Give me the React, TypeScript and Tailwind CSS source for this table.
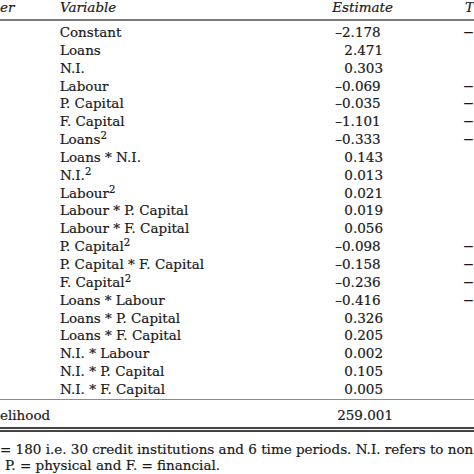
import React from "react";

type Row = { v: React.ReactNode; e: string; t?: boolean };

const sq = (s: string) => (
  <>
    {s}
    <sup>2</sup>
  </>
);

const rows: Row[] = [
  { v: "Constant", e: "–2.178", t: true },
  { v: "Loans", e: "2.471" },
  { v: "N.I.", e: "0.303" },
  { v: "Labour", e: "–0.069", t: true },
  { v: "P. Capital", e: "–0.035", t: true },
  { v: "F. Capital", e: "–1.101", t: true },
  { v: sq("Loans"), e: "–0.333", t: true },
  { v: "Loans * N.I.", e: "0.143" },
  { v: sq("N.I."), e: "0.013" },
  { v: sq("Labour"), e: "0.021" },
  { v: "Labour * P. Capital", e: "0.019" },
  { v: "Labour * F. Capital", e: "0.056" },
  { v: sq("P. Capital"), e: "–0.098", t: true },
  { v: "P. Capital * F. Capital", e: "–0.158", t: true },
  { v: sq("F. Capital"), e: "–0.236", t: true },
  { v: "Loans * Labour", e: "–0.416", t: true },
  { v: "Loans * P. Capital", e: "0.326" },
  { v: "Loans * F. Capital", e: "0.205" },
  { v: "N.I. * Labour", e: "0.002" },
  { v: "N.I. * P. Capital", e: "0.105" },
  { v: "N.I. * F. Capital", e: "0.005" },
];

export default function App() {
  return (
    <div
      className="flex flex-col w-[474px] h-[474px] overflow-hidden bg-white text-[#1a1a1a] text-[13.5px] [-webkit-text-stroke:0.2px_#1a1a1a]"
      style={{ fontFamily: '"DejaVu Serif", serif' }}
    >
      <div className="flex shrink-0 h-[21px] leading-[14px] italic whitespace-nowrap border-b-2 border-solid border-[#7a7a7a]">
        <div className="w-[60px]">er</div>
        <div className="w-[253px]">Variable</div>
        <div className="w-[80px] text-right">Estimate</div>
        <div className="pl-[72px]">T</div>
      </div>
      <div className="shrink-0 pt-[3px] leading-[17.85px]">
        {rows.map((r, i) => (
          <div key={i} className="flex whitespace-nowrap">
            <div className="w-[60px]" />
            <div className="w-[253px]">{r.v}</div>
            <div className="w-[80px] text-right pr-[10px]">{r.e}</div>
            <div className="pl-[72px]">{r.t ? "−" : ""}</div>
          </div>
        ))}
      </div>
      <div className="shrink-0 flex whitespace-nowrap h-[33px] leading-[17.85px] pt-[7px] border-t border-solid border-t-[#8c8c8c] border-b-[5px] border-b-[#444444] [border-bottom-style:double]">
        <div className="w-[313px]">elihood</div>
        <div className="w-[80px] text-right">259.001</div>
      </div>
      <div className="shrink-0 pt-[9px] leading-[16px] whitespace-nowrap">
        <div>= 180 i.e. 30 credit institutions and 6 time periods. N.I. refers to non</div>
        <div className="pl-[5px]">P. = physical and F. = financial.</div>
      </div>
    </div>
  );
}
